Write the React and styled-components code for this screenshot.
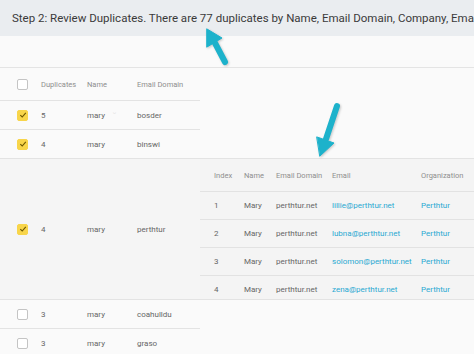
import styled, { createGlobalStyle } from "styled-components";

const GlobalStyle = createGlobalStyle`
  body {
    margin: 0;
    background: #fafafa;
    font-family: Roboto, "Liberation Sans", sans-serif;
  }
`;

const Page = styled.div`
  position: relative;
  width: 474px;
  height: 354px;
  overflow: hidden;
  background: #fafafa;
`;

// Title bar with the step text
const TitleBar = styled.div`
  height: 36px;
  display: flex;
  align-items: center;
  padding: 0 12px;
  background: #eaedf0;
  color: #3a3a3a;
  font-size: 11.5px;
  white-space: nowrap;
  overflow: hidden;
`;

const Toolbar = styled.div`
  height: 31px;
  border-bottom: 1px solid #e4e4e4;
  background: #fafafa;
`;

// Main duplicates table
const Row = styled.div`
  display: grid;
  grid-template-columns: 41px 46px 50px 63px;
  width: 200px;
  height: ${(p) => p.h}px;
  align-items: center;
  border-bottom: 1px solid #e3e3e3;
  background: ${(p) => p.bg || "#fafafa"};
  color: ${(p) => (p.head ? "#8e8e8e" : "#666")};
  font-size: ${(p) => (p.head ? "7.5px" : "8px")};
`;

const Cell = styled.div`
  display: flex;
  align-items: center;
  padding-left: ${(p) => p.pl || 0}px;
  white-space: nowrap;
`;

const Expanded = styled.div`
  display: flex;
  height: 140px;
  border-bottom: 1px solid #e3e3e3;
  background: #f5f5f5;
`;

const Box = styled.div`
  width: 11px;
  height: 11px;
  box-sizing: border-box;
  border-radius: 2px;
  display: flex;
  align-items: center;
  justify-content: center;
  background: ${(p) => (p.checked ? "#f8d54a" : "#fff")};
  border: 1px solid ${(p) => (p.checked ? "#f8d54a" : "#c4c4c4")};
`;

const Hint = styled.span`
  margin-left: 7px;
  margin-top: -6px;
  font-size: 5px;
  color: #ccc;
`;

// Nested detail table
const Nested = styled.div`
  flex: 1;
  border-top: 1px solid #e3e3e3;
  margin-top: -1px;
  background: #f4f4f4;
`;

const NRow = styled.div`
  display: grid;
  grid-template-columns: 44px 32px 56px 89px 1fr;
  height: ${(p) => p.h}px;
  align-items: center;
  border-bottom: ${(p) => (p.last ? "none" : "1px solid #e2e2e2")};
  color: ${(p) => (p.head ? "#8e8e8e" : "#666")};
  font-size: ${(p) => (p.head ? "7.5px" : "8px")};
  white-space: nowrap;
  & > div:first-child {
    padding-left: 14px;
  }
`;

const Link = styled.div`
  color: #2aa9d2;
`;

const Arrows = styled.svg`
  position: absolute;
  left: 0;
  top: 0;
  pointer-events: none;
  filter: drop-shadow(1px 1px 1px rgba(0, 0, 0, 0.2));
`;

function Check({ checked }) {
  return (
    <Box checked={checked}>
      {checked && (
        <svg width="8" height="8" viewBox="0 0 8 8">
          <path d="M1.3 4.2 L3.2 6 L6.8 1.8" fill="none" stroke="#6b5500" strokeWidth="1.1" />
        </svg>
      )}
    </Box>
  );
}

const people = [
  ["1", "lillie"],
  ["2", "lubna"],
  ["3", "solomon"],
  ["4", "zena"],
];

function MainRow({ checked, count, name, domain, hint, h = 28 }) {
  return (
    <Row h={h}>
      <Cell pl={17}><Check checked={checked} /></Cell>
      <Cell>{count}</Cell>
      <Cell>{name}{hint && <Hint>⇔</Hint>}</Cell>
      <Cell>{domain}</Cell>
    </Row>
  );
}

export default function App() {
  return (
    <Page>
      <GlobalStyle />
      <TitleBar>Step 2: Review Duplicates. There are 77 duplicates by Name, Email Domain, Company, Email</TitleBar>
      <Toolbar />
      <Row head h={32}>
        <Cell pl={17}><Check /></Cell>
        <Cell>Duplicates</Cell>
        <Cell>Name</Cell>
        <Cell>Email Domain</Cell>
      </Row>
      <MainRow checked count="5" name="mary" domain="bosder" hint />
      <MainRow checked count="4" name="mary" domain="binswi" />
      <Expanded>
        <Row h={140} bg="#f5f5f5" style={{ borderBottom: "none" }}>
          <Cell pl={17}><Check checked /></Cell>
          <Cell>4</Cell>
          <Cell>mary</Cell>
          <Cell>perthtur</Cell>
        </Row>
        <Nested>
          <NRow head h={32}>
            <div>Index</div>
            <div>Name</div>
            <div>Email Domain</div>
            <div>Email</div>
            <div>Organization</div>
          </NRow>
          {people.map(([i, e], n) => (
            <NRow key={i} h={27} last={n === 3}>
              <div>{i}</div>
              <div>Mary</div>
              <div>perthtur.net</div>
              <Link>{e}@perthtur.net</Link>
              <Link>Perthtur</Link>
            </NRow>
          ))}
        </Nested>
      </Expanded>
      <MainRow count="3" name="mary" domain="coahulldu" />
      <MainRow count="3" name="mary" domain="graso" h={29} />
      <Arrows width="474" height="354">
        <g fill="#1db2cb" stroke="#1db2cb" strokeLinecap="round">
          <line x1="225" y1="62" x2="215" y2="43" strokeWidth="6" />
          <polygon points="207,29 222,38 207,47" strokeWidth="1" strokeLinejoin="round" />
          <line x1="337" y1="106" x2="326" y2="139" strokeWidth="6" />
          <polygon points="320,156 334,143 317,137" strokeWidth="1" strokeLinejoin="round" />
        </g>
      </Arrows>
    </Page>
  );
}
